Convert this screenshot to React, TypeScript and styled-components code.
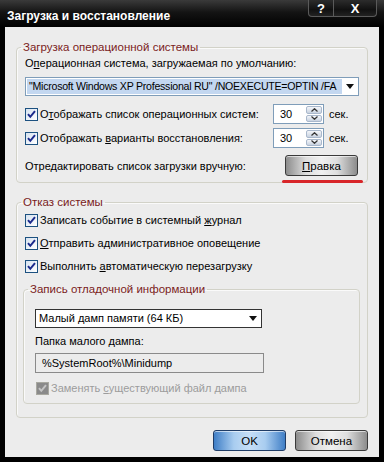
import React from 'react';
import styled, {createGlobalStyle} from 'styled-components';

const GlobalStyle = createGlobalStyle`
    html, body {
        margin: 0;
        padding: 0;
        background: #000;
    }
    body {
        font-family: "Liberation Sans", Arial, sans-serif;
        font-size: 11px;
        color: #000;
    }
`

const Window = styled.div`
    width: 384px;
    height: 462px;
    background: #000;
    display: flex;
    flex-direction: column;
    box-sizing: border-box;
`

const TitleBar = styled.div`
    height: 27px;
    display: flex;
    align-items: flex-start;
    justify-content: space-between;
    background: linear-gradient(#3a3a3a, #141414 45%, #000);
    padding: 0 7px 0 7px;
    flex-shrink: 0;
`

const Title = styled.div`
    color: #fff;
    font-weight: bold;
    font-size: 12px;
    line-height: 14px;
    margin-top: 9px;
`

const TitleButtons = styled.div`
    display: flex;
`

const TitleButton = styled.div<{ $w: number }>`
    width: ${p => p.$w}px;
    height: 17px;
    box-sizing: border-box;
    border: 1px solid #5a5a5a;
    border-top: none;
    background: linear-gradient(#2c2c2c, #111 60%, #222);
    display: flex;
    align-items: center;
    justify-content: center;
    color: #fff;
    font-weight: bold;
    font-size: 13px;
    &:first-child {
        border-radius: 0 0 0 4px;
    }
    &:last-child {
        border-left: none;
        border-radius: 0 0 4px 0;
    }
`

const Client = styled.div`
    flex: 1;
    margin: 0 5px 6px 5px;
    background: #ececec;
    padding: 13px 11px 6px 11px;
    display: flex;
    flex-direction: column;
`

const Group = styled.fieldset`
    margin: 0;
    padding: 0;
    border: 1px solid #d2d2c8;
    border-radius: 4px;
    min-width: 0;
    box-shadow: inset 1px 1px 0 #fafafa;
`

const Legend = styled.legend<{ $indent: number }>`
    margin-left: ${p => p.$indent}px;
    padding: 0 2px;
    color: #7a1c1c;
    line-height: 14px;
    font-size: 11.5px;
`

const Group1Body = styled.div`
    display: flex;
    flex-direction: column;
    padding: 2px 8px 6px 8px;
`

const Group2 = styled(Group)`
    margin-top: 12px;
`

const Group2Body = styled.div`
    display: flex;
    flex-direction: column;
    padding: 3px 7px 13px 6px;
`

const InnerGroup = styled(Group)`
    margin-top: 8px;
`

const InnerBody = styled.div`
    display: flex;
    flex-direction: column;
    padding: 13px 11px 7px 11px;
`

const Text = styled.div<{ $gap?: number; $muted?: boolean }>`
    line-height: 14px;
    margin-top: ${p => p.$gap ?? 0}px;
    color: ${p => (p.$muted ? '#9c9c9c' : '#000')};
    white-space: nowrap;
`

const Combo = styled.div<{ $selected?: boolean; $width?: number; $gap: number }>`
    height: 19px;
    box-sizing: border-box;
    width: ${p => (p.$width ? `${p.$width}px` : 'auto')};
    margin-top: ${p => p.$gap}px;
    border: 1px solid ${p => (p.$selected ? '#7f9db9' : '#333')};
    background: #fff;
    display: flex;
    align-items: center;
    padding: 1px;
`

const ComboValue = styled.div<{ $selected?: boolean }>`
    flex: 1;
    height: 100%;
    overflow: hidden;
    white-space: nowrap;
    line-height: 15px;
    padding-left: 2px;
    font-size: ${p => (p.$selected ? '10.6px' : '11px')};
    letter-spacing: ${p => (p.$selected ? '-0.25px' : 'normal')};
    background: ${p => (p.$selected ? '#c3d7f0' : 'transparent')};
`

const ComboArrow = styled.div`
    width: 15px;
    display: flex;
    align-items: center;
    justify-content: center;
    &::after {
        content: '';
        border-left: 4px solid transparent;
        border-right: 4px solid transparent;
        border-top: 5px solid #111;
    }
`

const Row = styled.div<{ $gap: number; $indent?: number }>`
    display: flex;
    align-items: center;
    margin-top: ${p => p.$gap}px;
    margin-left: ${p => p.$indent ?? 0}px;
    white-space: nowrap;
    position: relative;
`

const CheckRow = styled(Row)`
    height: 16px;
    gap: 2px;
`

const Spacer = styled.div`
    flex: 1;
`

const Box = styled.div<{ $disabled?: boolean }>`
    width: 13px;
    height: 13px;
    box-sizing: border-box;
    border: 1px solid ${p => (p.$disabled ? '#a8a8a0' : '#1c5180')};
    background: ${p => (p.$disabled ? '#8a8a8a' : 'linear-gradient(135deg, #d6e2f0, #fff)')};
    display: flex;
    flex-shrink: 0;
`

const Check = ({disabled}: { disabled?: boolean }) => (
    <Box $disabled={disabled}>
        <svg width="11" height="11" viewBox="0 0 11 11">
            <path d="M2 5.2 L4.3 7.8 L9 2.2" fill="none" stroke={disabled ? '#c4c4c4' : '#1b2a8c'}
                  strokeWidth="2"/>
        </svg>
    </Box>
)

const Spin = styled.div`
    width: 51px;
    height: 20px;
    box-sizing: border-box;
    border: 1px solid #7f9db9;
    background: #fff;
    display: flex;
    align-items: center;
    padding: 1px;
`

const SpinValue = styled.div`
    flex: 1;
    padding-left: 5px;
    line-height: 16px;
`

const SpinButtons = styled.div`
    width: 16px;
    height: 100%;
    display: flex;
    flex-direction: column;
    gap: 1px;
`

const SpinButton = styled.div`
    flex: 1;
    border: 1px solid #a9b8cc;
    border-radius: 2px;
    background: linear-gradient(#f4f6fa, #c8d2e0);
    display: flex;
    align-items: center;
    justify-content: center;
`

const Unit = styled.span`
    width: 33px;
    padding-left: 3px;
    box-sizing: border-box;
`

const Chevron = ({down}: { down?: boolean }) => (
    <svg width="7" height="4" viewBox="0 0 7 4">
        <path d={down ? 'M0.5 0.5 L3.5 3.3 L6.5 0.5' : 'M0.5 3.5 L3.5 0.7 L6.5 3.5'} fill="none"
              stroke="#333" strokeWidth="1.2"/>
    </svg>
)

const SpinBox = ({value}: { value: string }) => (
    <Spin>
        <SpinValue>{value}</SpinValue>
        <SpinButtons>
            <SpinButton><Chevron/></SpinButton>
            <SpinButton><Chevron down/></SpinButton>
        </SpinButtons>
    </Spin>
)

const Button = styled.div<{ $primary?: boolean }>`
    width: 73px;
    height: 21px;
    box-sizing: border-box;
    border: 1px solid ${p => (p.$primary ? '#1f3c66' : '#3a3a3a')};
    border-radius: 3px;
    display: flex;
    align-items: center;
    justify-content: center;
    line-height: 14px;
    font-size: 11.5px;
    background: ${p => p.$primary
            ? 'linear-gradient(to right, #3f7ec6, #a9cdf0 28%, #c6def6 50%, #a9cdf0 72%, #3f7ec6)'
            : 'linear-gradient(to right, #8c8c8c, #dedede 28%, #f0f0f0 50%, #dedede 72%, #8c8c8c)'};
    box-shadow: inset 0 1px 0 rgba(255, 255, 255, 0.6);
`

const EditWrap = styled.div`
    position: relative;
    margin-right: 1px;
`

const RedMark = styled.div`
    position: absolute;
    left: -3px;
    right: -5px;
    top: 25px;
    height: 3px;
    border-radius: 2px;
    background: #d8262a;
`

const TextBox = styled.div`
    width: 229px;
    height: 20px;
    box-sizing: border-box;
    margin-top: 5px;
    border: 1px solid #8a8a8a;
    background: #ececec;
    padding-left: 6px;
    line-height: 18px;
`

const Footer = styled.div`
    display: flex;
    justify-content: flex-end;
    gap: 9px;
    margin-top: 12px;
`

const U = styled.span`
    text-decoration: underline;
`

export default function App() {
    return (
        <>
            <GlobalStyle/>
            <Window>
                <TitleBar>
                    <Title>Загрузка и восстановление</Title>
                    <TitleButtons>
                        <TitleButton $w={26}>?</TitleButton>
                        <TitleButton $w={43}>X</TitleButton>
                    </TitleButtons>
                </TitleBar>
                <Client>
                    <Group>
                        <Legend $indent={4}>Загрузка операционной системы</Legend>
                        <Group1Body>
                            <Text>О<U>п</U>ерационная система, загружаемая по умолчанию:</Text>
                            <Combo $selected $gap={7}>
                                <ComboValue $selected>"Microsoft Windows XP Professional RU" /NOEXECUTE=OPTIN /FA</ComboValue>
                                <ComboArrow/>
                            </Combo>
                            <CheckRow $gap={10}>
                                <Check/>
                                <span>О<U>т</U>ображать список операционных систем:</span>
                                <Spacer/>
                                <SpinBox value="30"/>
                                <Unit>сек.</Unit>
                            </CheckRow>
                            <CheckRow $gap={8}>
                                <Check/>
                                <span>Отображать <U>в</U>арианты восстановления:</span>
                                <Spacer/>
                                <SpinBox value="30"/>
                                <Unit>сек.</Unit>
                            </CheckRow>
                            <Row $gap={9}>
                                <span>Отредактировать список загрузки вручную:</span>
                                <Spacer/>
                                <EditWrap>
                                    <Button><U>П</U>равка</Button>
                                    <RedMark/>
                                </EditWrap>
                            </Row>
                        </Group1Body>
                    </Group>
                    <Group2>
                        <Legend $indent={4}>Отказ системы</Legend>
                        <Group2Body>
                            <CheckRow $gap={0} $indent={2}>
                                <Check/>
                                <span>Записать событие в системный <U>ж</U>урнал</span>
                            </CheckRow>
                            <CheckRow $gap={7} $indent={2}>
                                <Check/>
                                <span><U>О</U>тправить административное оповещение</span>
                            </CheckRow>
                            <CheckRow $gap={7} $indent={2}>
                                <Check/>
                                <span>Выполнить <U>а</U>втоматическую перезагрузку</span>
                            </CheckRow>
                            <InnerGroup>
                                <Legend $indent={4}>Запись отладочной информации</Legend>
                                <InnerBody>
                                    <Combo $width={227} $gap={0}>
                                        <ComboValue>Малый дамп памяти (64 КБ)</ComboValue>
                                        <ComboArrow/>
                                    </Combo>
                                    <Text $gap={6}>Папка малого дампа:</Text>
                                    <TextBox>%SystemRoot%\Minidump</TextBox>
                                    <CheckRow $gap={7} $indent={1}>
                                        <Check disabled/>
                                        <Text $muted>Заменять <U>с</U>уществующий файл дампа</Text>
                                    </CheckRow>
                                </InnerBody>
                            </InnerGroup>
                        </Group2Body>
                    </Group2>
                    <Footer>
                        <Button $primary>OK</Button>
                        <Button>Отмена</Button>
                    </Footer>
                </Client>
            </Window>
        </>
    );
}
